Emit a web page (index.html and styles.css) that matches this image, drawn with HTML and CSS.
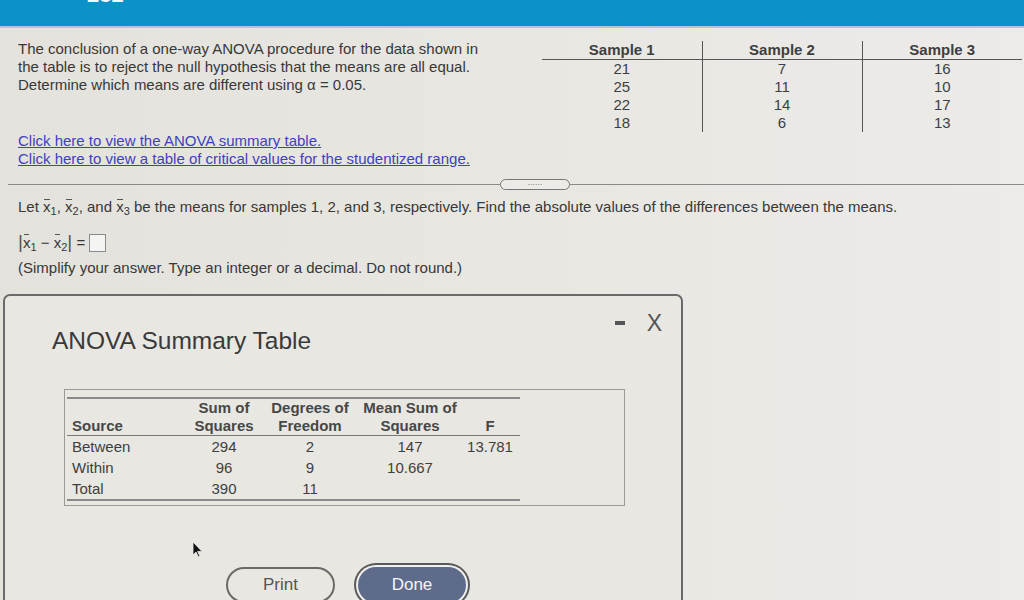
FILE: index.html
```html
<!DOCTYPE html>
<html>
<head>
<meta charset="utf-8">
<link rel="stylesheet" href="styles.css">
</head>
<body>
<div class="topbar"><span class="qnum">232</span></div>

<div class="question">
  <div class="toprow">
    <p class="intro">The conclusion of a one-way ANOVA procedure for the data shown in the table is to reject the null hypothesis that the means are all equal. Determine which means are different using α = 0.05.</p>
    <table class="samples">
      <thead>
        <tr><th>Sample 1</th><th>Sample 2</th><th>Sample 3</th></tr>
      </thead>
      <tbody>
        <tr><td>21</td><td>7</td><td>16</td></tr>
        <tr><td>25</td><td>11</td><td>10</td></tr>
        <tr><td>22</td><td>14</td><td>17</td></tr>
        <tr><td>18</td><td>6</td><td>13</td></tr>
      </tbody>
    </table>
  </div>
  <div class="links">
    <a href="#">Click here to view the ANOVA summary table.</a>
    <a href="#">Click here to view a table of critical values for the studentized range.</a>
  </div>
</div>

<div class="divider"><span class="line short"></span><span class="handle">• • • • • •</span><span class="line"></span></div>

<div class="question">
  <p class="letline">Let <span class="xb">x</span><sub>1</sub>, <span class="xb">x</span><sub>2</sub>, and <span class="xb">x</span><sub>3</sub> be the means for samples 1, 2, and 3, respectively. Find the absolute values of the differences between the means.</p>
  <p class="formula"><span class="abs">|</span><span class="xb">x</span><sub>1</sub> − <span class="xb">x</span><sub>2</sub><span class="abs">|</span> = <span class="answer"></span></p>
  <p class="hint">(Simplify your answer. Type an integer or a decimal. Do not round.)</p>
</div>

<div class="popup">
  <div class="popup-head">
    <h2 class="popup-title">ANOVA Summary Table</h2>
    <div class="controls"><span class="minimize"></span><span class="close">X</span></div>
  </div>
  <div class="anova-box">
    <table class="anova">
      <colgroup><col class="c1"><col class="c2"><col class="c3"><col class="c4"><col class="c5"></colgroup>
      <thead>
        <tr><th class="left">Source</th><th>Sum of<br>Squares</th><th>Degrees of<br>Freedom</th><th>Mean Sum of<br>Squares</th><th>F</th></tr>
      </thead>
      <tbody>
        <tr><td class="left">Between</td><td>294</td><td>2</td><td>147</td><td>13.781</td></tr>
        <tr><td class="left">Within</td><td>96</td><td>9</td><td>10.667</td><td></td></tr>
        <tr><td class="left">Total</td><td>390</td><td>11</td><td></td><td></td></tr>
      </tbody>
    </table>
  </div>
  <div class="buttons">
    <button class="btn print">Print</button>
    <button class="btn done">Done</button>
  </div>
  <svg class="cursor" width="12" height="18" viewBox="0 0 12 18"><path d="M1 1 L1 14 L4 11 L6.5 16 L8 15.3 L5.6 10.4 L10 10.4 Z" fill="#111" stroke="#eee" stroke-width="0.8"/></svg>
</div>
</body>
</html>
```

FILE: styles.css
```css
html, body {
  margin: 0;
  padding: 0;
  height: 600px;
  overflow: hidden;
}
body {
  background: linear-gradient(90deg, #e4e2dc 0%, #e8e7e2 55%, #ecebe8 100%);
  font-family: "Liberation Sans", Arial, sans-serif;
  color: #383838;
  font-size: 15px;
}
.topbar {
  height: 26px;
  background: #0c92c8;
  border-bottom: 2px solid #a9c9d6;
  overflow: hidden;
  padding-left: 87px;
}
.qnum {
  display: block;
  color: #f4f8fb;
  font-weight: bold;
  font-size: 22px;
  line-height: 22px;
  margin-top: -16px;
}
.question {
  padding-left: 18px;
}
.toprow {
  display: flex;
  margin-top: 12px;
}
.intro {
  margin: 0;
  width: 470px;
  line-height: 18px;
}
.samples {
  margin-left: auto;
  margin-top: 1px;
  margin-right: 2px;
  width: 480px;
  border-collapse: collapse;
  table-layout: fixed;
  color: #3f3f3f;
}
.samples th {
  font-weight: bold;
  height: 18px;
  line-height: 18px;
  padding: 0;
  border-bottom: 1px solid #555;
}
.samples td {
  text-align: center;
  height: 18px;
  line-height: 18px;
  padding: 0;
}
.samples th + th, .samples td + td {
  border-left: 1px solid #555;
}
.links {
  display: flex;
  flex-direction: column;
  line-height: 18px;
}
.links a {
  color: #4040c4;
  text-decoration: underline;
  align-self: flex-start;
}
.divider {
  display: flex;
  align-items: center;
  margin: 10px 0 0 8px;
  height: 12px;
}
.divider .line {
  flex: 1;
  height: 1px;
  background: #8a8a8a;
}
.divider .line.short {
  flex: 0 0 492px;
}
.handle {
  width: 68px;
  height: 9px;
  border: 1px solid #777;
  border-radius: 6px;
  background: #ecebe7;
  font-size: 4px;
  line-height: 9px;
  text-align: center;
  color: #777;
}
.letline {
  margin: 8px 0 0;
  line-height: 18px;
}
.formula {
  margin: 17px 0 0;
  line-height: 20px;
  height: 20px;
}
.abs {
  font-size: 19px;
  line-height: 18px;
  color: #555;
}
.answer {
  display: inline-block;
  width: 15px;
  height: 16px;
  border: 1px solid #8a8a8a;
  background: #f4f4f2;
  vertical-align: -4px;
}
.xb {
  position: relative;
  display: inline-block;
}
.xb::before {
  content: "";
  position: absolute;
  left: 1px;
  right: 1px;
  top: 1px;
  height: 1px;
  background: #555;
}
sub {
  font-size: 11px;
  vertical-align: -3px;
  line-height: 0;
}
.hint {
  margin: 6px 0 0;
  line-height: 18px;
}
.popup {
  position: relative;
  margin: 17px 0 0 3px;
  width: 676px;
  height: 340px;
  border: 2px solid #6a6a6a;
  border-radius: 7px;
  background: #e8e7e2;
}
.popup-head {
  display: flex;
  justify-content: space-between;
  align-items: flex-start;
  padding: 0 19px 0 47px;
}
.popup-title {
  margin: 31px 0 0;
  font-weight: normal;
  font-size: 24.5px;
  line-height: 28px;
  color: #3a3a3a;
}
.controls {
  display: flex;
  align-items: center;
  gap: 22px;
  margin-top: 16px;
  height: 22px;
}
.minimize {
  display: inline-block;
  width: 10px;
  height: 4px;
  background: #555;
}
.close {
  font-size: 23px;
  line-height: 22px;
  color: #555;
}
.anova-box {
  margin: 34px 0 0 59px;
  width: 557px;
  height: 108px;
  border: 1px solid #9a9a9a;
  padding: 7px 0 0 2px;
}
.anova {
  width: 453px;
  border-collapse: collapse;
  table-layout: fixed;
  border-top: 2px solid #8a8a8a;
  border-bottom: 2px solid #8a8a8a;
  color: #3f3f3f;
}
.c1 { width: 121px; }
.c2 { width: 72px; }
.c3 { width: 100px; }
.c4 { width: 100px; }
.c5 { width: 60px; }
.anova th {
  font-weight: bold;
  line-height: 18px;
  padding: 0;
  text-align: center;
  vertical-align: bottom;
  border-bottom: 1px solid #777;
  color: #474747;
}
.anova td {
  text-align: center;
  height: 21px;
  line-height: 21px;
  padding: 0;
}
.anova .left {
  text-align: left;
  padding-left: 5px;
}
.buttons {
  display: flex;
  gap: 23px;
  margin-top: 61px;
  padding-left: 221px;
}
.btn {
  font-family: "Liberation Sans", Arial, sans-serif;
  font-size: 17px;
  height: 36px;
  border-radius: 18px;
  padding: 0;
  cursor: pointer;
}
.print {
  width: 109px;
  background: transparent;
  border: 2px solid #6a6a6a;
  color: #555;
}
.done {
  width: 108px;
  background: #5e6b8a;
  border: none;
  color: #f6f6f8;
  box-shadow: 0 0 0 2px #f0f0ee, 0 0 0 4px #5a5a5a;
}
.cursor {
  position: absolute;
  left: 187px;
  top: 245px;
}
```
